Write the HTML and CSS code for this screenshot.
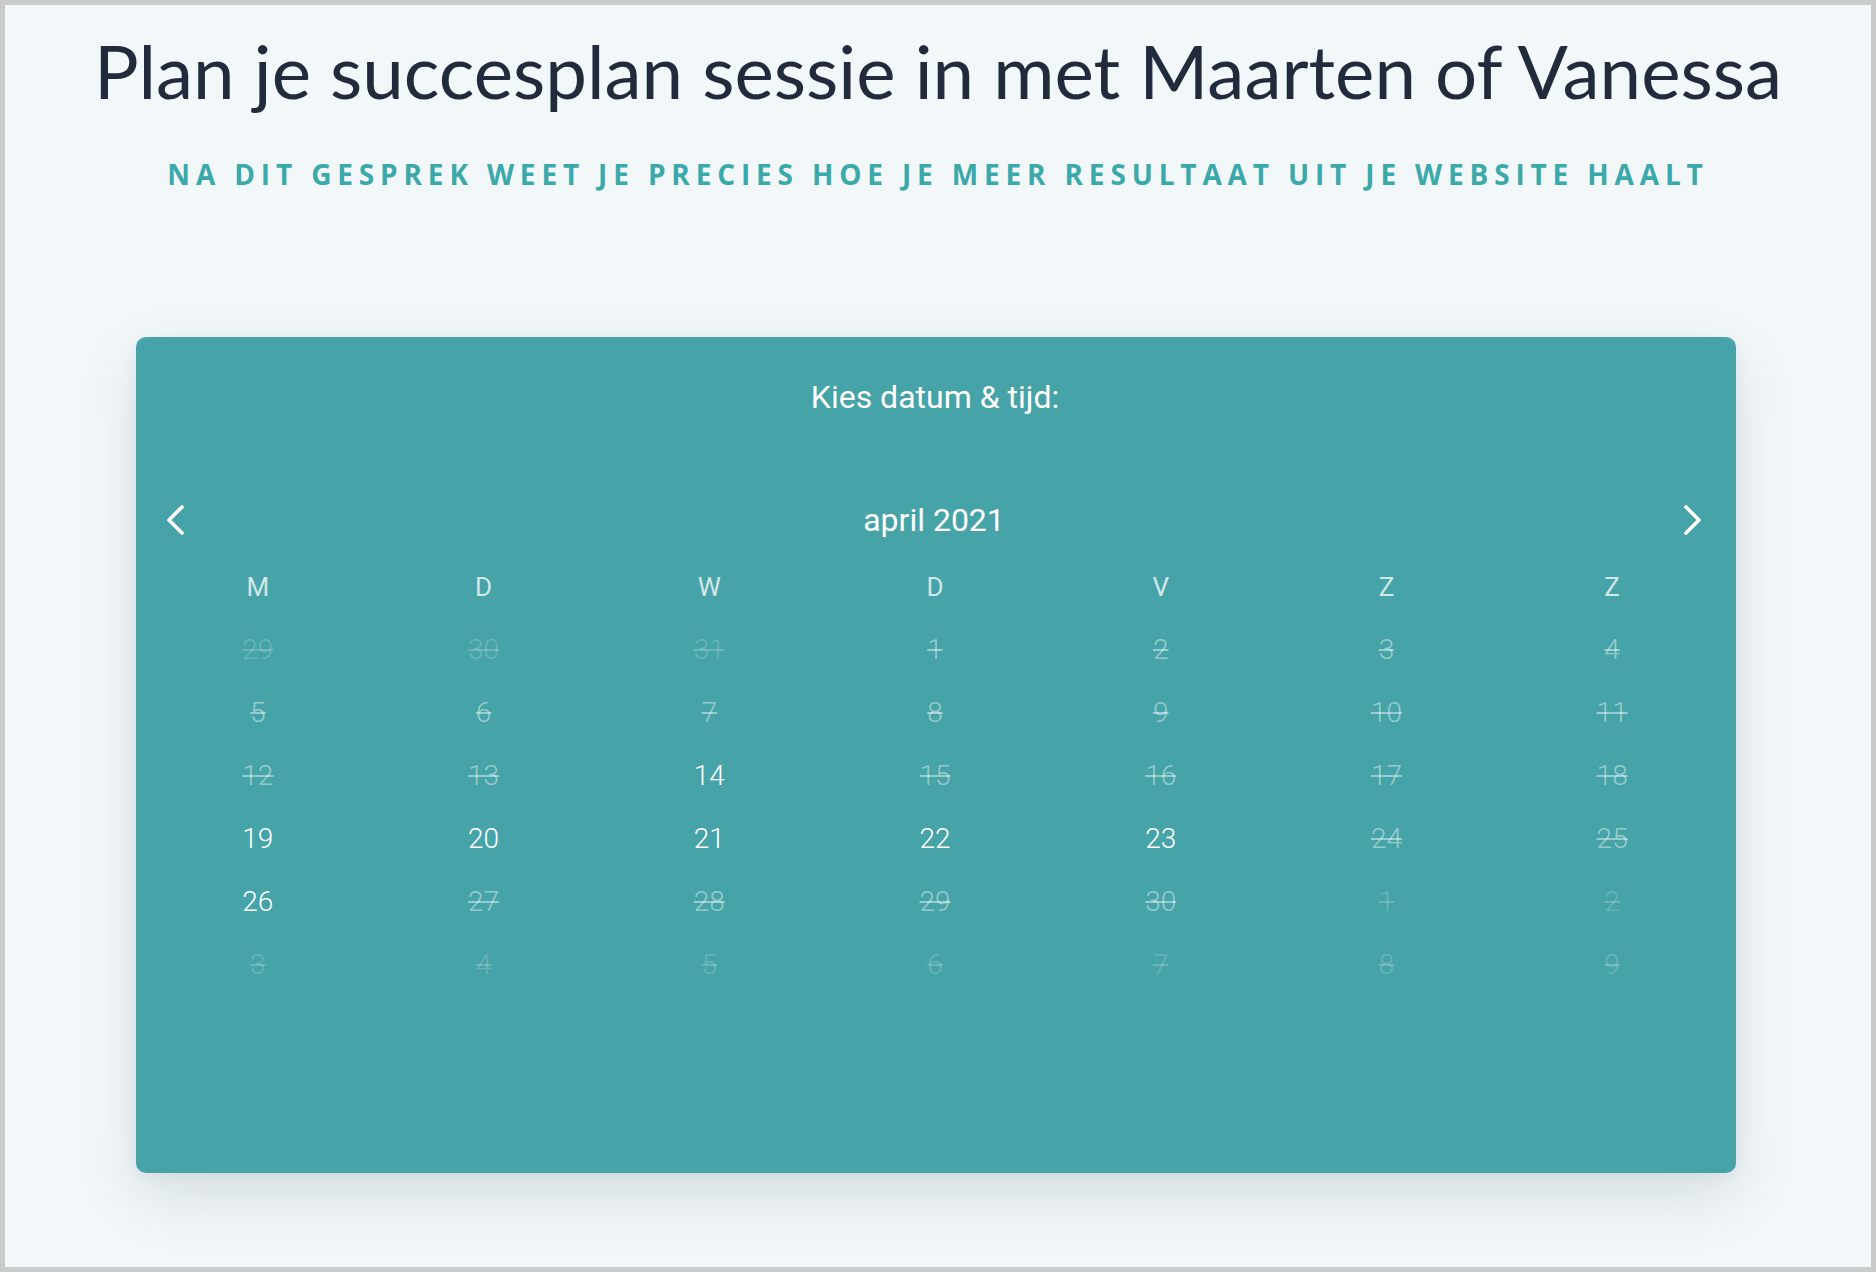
FILE: index.html
```html
<!DOCTYPE html>
<html lang="nl">
<head>
<meta charset="utf-8">
<title>Plan je succesplan sessie</title>
<link rel="stylesheet" href="styles.css">
</head>
<body>
<main class="page">
  <h1 class="title">Plan je succesplan sessie in met Maarten of Vanessa</h1>
  <p class="subtitle">Na dit gesprek weet je precies hoe je meer resultaat uit je website haalt</p>

  <section class="card">
    <h2 class="card-title">Kies datum &amp; tijd:</h2>
    <div class="nav">
      <button class="nav-btn" aria-label="Vorige maand">
        <svg width="22" height="32" viewBox="0 0 22 32"><path d="M18 3 L5 16 L18 29" fill="none" stroke="#fff" stroke-width="3.6" stroke-linecap="round" stroke-linejoin="round"/></svg>
      </button>
      <div class="month">april 2021</div>
      <button class="nav-btn" aria-label="Volgende maand">
        <svg width="22" height="32" viewBox="0 0 22 32"><path d="M4 3 L17 16 L4 29" fill="none" stroke="#fff" stroke-width="3.6" stroke-linecap="round" stroke-linejoin="round"/></svg>
      </button>
    </div>
    <div class="grid">
      <div class="wd">M</div><div class="wd">D</div><div class="wd">W</div><div class="wd">D</div><div class="wd">V</div><div class="wd">Z</div><div class="wd">Z</div>

      <div class="day out">29</div><div class="day out">30</div><div class="day out">31</div><div class="day off">1</div><div class="day off">2</div><div class="day off">3</div><div class="day off">4</div>

      <div class="day off">5</div><div class="day off">6</div><div class="day off">7</div><div class="day off">8</div><div class="day off">9</div><div class="day off">10</div><div class="day off">11</div>

      <div class="day off">12</div><div class="day off">13</div><div class="day">14</div><div class="day off">15</div><div class="day off">16</div><div class="day off">17</div><div class="day off">18</div>

      <div class="day">19</div><div class="day">20</div><div class="day">21</div><div class="day">22</div><div class="day">23</div><div class="day off">24</div><div class="day off">25</div>

      <div class="day">26</div><div class="day off">27</div><div class="day off">28</div><div class="day off">29</div><div class="day off">30</div><div class="day out">1</div><div class="day out">2</div>

      <div class="day out">3</div><div class="day out">4</div><div class="day out">5</div><div class="day out">6</div><div class="day out">7</div><div class="day out">8</div><div class="day out">9</div>
    </div>
  </section>
</main>
</body>
</html>
```

FILE: styles.css
```css
html, body {
  margin: 0;
  padding: 0;
}

body {
  background: #f2f7fa;
}

.page {
  box-sizing: border-box;
  height: 1272px;
  border: 5px solid #cbcbcb;
  background: #f2f7fa;
  overflow: hidden;
  display: flex;
  flex-direction: column;
  align-items: center;
}

.title {
  margin: 21px 0 0;
  font-family: Lato, "Noto Sans", sans-serif;
  font-weight: 400;
  font-size: 74.5px;
  line-height: 88px;
  color: #222b3b;
  text-align: center;
  white-space: nowrap;
}

.subtitle {
  margin: 43px 0 0;
  font-family: "Open Sans", "Noto Sans", sans-serif;
  font-weight: 700;
  font-size: 28px;
  line-height: 34px;
  letter-spacing: 5.85px;
  text-transform: uppercase;
  color: #3ba8a9;
  text-align: center;
  white-space: nowrap;
}

.card {
  box-sizing: border-box;
  width: 1600px;
  height: 836px;
  margin-top: 146px;
  margin-right: 4px;
  padding: 0 11px 0 9px;
  background: #46a3a8;
  border-radius: 10px;
  box-shadow: 0 24px 60px rgba(40, 60, 70, 0.13), 0 4px 14px rgba(40, 60, 70, 0.05);
  font-family: Roboto, "Liberation Sans", sans-serif;
  color: #fff;
}

.card-title {
  margin: 0;
  padding-top: 40px;
  height: 40px;
  line-height: 40px;
  font-size: 32px;
  font-weight: 400;
  text-align: center;
}

.nav {
  margin-top: 83px;
  height: 40px;
  padding: 0 12px 0 10px;
  display: flex;
  align-items: center;
  justify-content: space-between;
}

.nav-btn {
  width: 40px;
  height: 40px;
  padding: 0;
  border: 0;
  background: none;
  display: flex;
  align-items: center;
  justify-content: center;
}

.month {
  font-size: 32px;
  line-height: 40px;
  font-weight: 400;
}

.grid {
  margin-top: 15px;
  display: grid;
  grid-template-columns: repeat(7, 1fr);
  grid-auto-rows: 63px;
  align-items: center;
  justify-items: center;
}

.wd {
  font-size: 26px;
  font-weight: 400;
  color: rgba(255, 255, 255, 0.75);
}

.day {
  font-size: 28px;
  font-weight: 300;
  color: #fff;
}

.day.off {
  color: rgba(255, 255, 255, 0.45);
  text-decoration: line-through;
}

.day.out {
  color: rgba(255, 255, 255, 0.2);
  text-decoration: line-through;
}
```
